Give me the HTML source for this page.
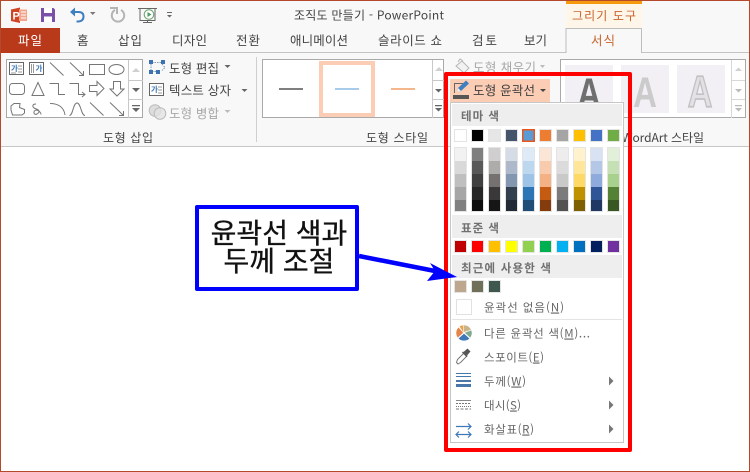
<!DOCTYPE html>
<html lang="ko"><head><meta charset="utf-8"><title>조직도 만들기 - PowerPoint</title>
<style>
html,body{margin:0;padding:0;background:#fff}
body{width:750px;height:472px;overflow:hidden}
svg{display:block}
text{font-family:"Liberation Sans","Noto Sans CJK KR",sans-serif;fill:#444;font-size:12px}
.k{font-family:"Noto Sans CJK KR","Liberation Sans",sans-serif}
.g{fill:#a8a8a8}
.m{fill:#666;font-size:11.5px}
.h{fill:#707070;font-size:11.5px;font-weight:700}
.u{text-decoration:underline}
.s{fill:none;stroke:#767676;stroke-width:1}
.b{font-size:28px;fill:#111;text-anchor:middle;stroke:#111;stroke-width:.35px}
</style></head><body>
<svg width="750" height="472" viewBox="0 0 750 472" xmlns="http://www.w3.org/2000/svg">
<rect width="750" height="472" fill="#fff"/>
<rect x="1" y="1" width="748" height="145" fill="#f8f8f8"/>
<rect x="0" y="146" width="750" height="1" fill="#c6c6c6"/>
<rect x="1" y="52" width="748" height="1" fill="#c4c4c4"/>

<!-- QAT -->
<path d="M11 9.5L20 7.5V23L11 21Z" fill="#d04423"/><rect x="19" y="9.5" width="8" height="11.5" fill="#f3a58b"/><path d="M21 12h5M21 15h5M21 18h5" stroke="#fff" stroke-width="1"/>
<text x="12.5" y="19.5" style="font-size:11px;font-weight:700;fill:#fff">P</text>
<path d="M41 8H53.5L55 9.5V22H41Z" fill="#7a50a8"/><rect x="44" y="8" width="8" height="5" fill="#fff"/><rect x="44" y="16.5" width="8" height="5.5" fill="#fff"/>
<path d="M71 12h7.5q5 0 5 4.5t-5 5h-2" fill="none" stroke="#3f7fbf" stroke-width="2"/><path d="M75 7.500l-5 4.500 5 4.500z" fill="#3f7fbf"/>
<path d="M90 12h5.500l-2.750 3z" fill="#777"/>
<path d="M115 10a6.200 6.200 0 1 0 6 0" fill="none" stroke="#b4b4b4" stroke-width="2"/><path d="M110 8h7v6" fill="none" stroke="#b4b4b4" stroke-width="2"/>
<path d="M138 8.500h19M140 8.500v12h15v-12M147.500 20.500v2M143 22.500h9" fill="none" stroke="#666"/><circle cx="149" cy="14.500" r="4.800" fill="#fff" stroke="#6aa26a"/><path d="M147.500 12l4 2.500-4 2.500z" fill="#4d9a6a"/>
<rect x="167" y="12" width="5" height="1" fill="#666"/><path d="M167 15h5l-2.500 2.500z" fill="#666"/>

<text class="k" x="294" y="19.500" textLength="150" style="font-size:12px">조직도 만들기 - PowerPoint</text>

<!-- contextual header -->
<rect x="566" y="1" width="76" height="27" fill="#fff6ea"/><rect x="566" y="1" width="76" height="3" fill="#f59a0c"/>
<text class="k" x="572" y="20" textLength="64" style="font-size:12px;fill:#c9622a">그리기 도구</text>

<!-- tabs -->
<rect x="1" y="28" width="59" height="25" fill="#b9391b"/>
<text class="k" x="18" y="45" textLength="24" style="fill:#fff;font-size:12.500px">파일</text>
<text class="k" x="77" y="45" style="font-size:12.500px">홈</text>
<text class="k" x="118" y="45" textLength="24" style="font-size:12.500px">삽입</text>
<text class="k" x="172" y="45" textLength="35" style="font-size:12.500px">디자인</text>
<text class="k" x="236" y="45" textLength="24" style="font-size:12.500px">전환</text>
<text class="k" x="290" y="45" textLength="58" style="font-size:12.500px">애니메이션</text>
<text class="k" x="378" y="45" textLength="64" style="font-size:12.500px">슬라이드 쇼</text>
<text class="k" x="472" y="45" textLength="25" style="font-size:12.500px">검토</text>
<text class="k" x="524" y="45" textLength="23" style="font-size:12.500px">보기</text>
<path d="M566 53V28.500H641.500V53" fill="#f8f8f8" stroke="#bdbdbd"/><rect x="567" y="51" width="74" height="3" fill="#f8f8f8"/>
<text class="k" x="591" y="45" textLength="24" style="fill:#c9622a;font-size:12.500px">서식</text>

<!-- shape gallery -->
<rect x="6.500" y="59.500" width="136" height="58" fill="#fff" stroke="#a9a9a9"/>
<path d="M128.500 60V118M129 80.500h14M129 99.500h14" stroke="#c8c8c8" fill="none"/>
<path d="M132 72l4-4 4 4z" fill="#d0d0d0"/><path d="M132 88h8l-4 4z" fill="#666"/><path d="M132 105h8v1.200h-8zM132 108h8l-4 4z" fill="#666"/>
<g>
<rect x="9.500" y="62.500" width="14" height="12" fill="#fff" stroke="#666"/>
<text class="k" x="11" y="71" style="font-size:7.500px;fill:#3a75b5;font-weight:700">가</text><path d="M18 66h4M18 69h4M18 72h4M11 73h5" stroke="#999"/>
<rect x="29.500" y="62.500" width="14" height="12" fill="#fff" stroke="#666"/>
<text class="k" x="35.500" y="71" style="font-size:7.500px;fill:#3a75b5;font-weight:700">가</text><path d="M31.500 64v9M33.500 64v9" stroke="#999"/>
<g class="s">
<path d="M50 62.500L63.500 75.500"/>
<path d="M70 62.500L83.500 75.500M83.500 71v4.500H79"/>
<rect x="89.500" y="64.500" width="15" height="10"/>
<ellipse cx="116.500" cy="69.500" rx="7.500" ry="5"/>
<rect x="9.500" y="83.500" width="15" height="11" rx="3"/>
<path d="M38 82.500L44 95.500H32Z"/>
<path d="M49.500 83.500H58.500V94.500H65"/>
<path d="M69.500 83.500H78.500V94.500H85M82 92l3 2.500-3 2.500"/>
<path d="M89.500 85.500H97V81.500L104 88.500L97 95.500V91.500H89.500Z"/>
<path d="M113.500 81.500H120.500V89H124L117 96L110 89H113.500Z"/>
<path d="M11 110V106L14 103.500H20L19.500 107.500L24.500 109.500V113L22 115H12.500Z"/>
<path d="M36 104C32 104 32 107 35 108.500C40 110 40 112 37 114C34 115.500 33 112 35 110.500C37 109 41 112 41 114.500"/>
<path d="M50 103.500C58 103.500 64 107 65 115"/>
<path d="M69.500 115.500C73 115.500 73 103 77 103C81 103 81 115.500 85 115.500"/>
<path d="M90 102.500L103.500 115.500"/>
<path d="M110 102.500L123.500 115.500M123.500 111v4.500H119"/>
</g></g>

<!-- edit shape commands -->
<path d="M152 62.500h10M152 71.500h4M151 64v6M162 64l3 3.500-3 3" fill="none" stroke="#7a9ac0" stroke-dasharray="1.500 1"/>
<g fill="#3c72b0"><rect x="149" y="60" width="4" height="4"/><rect x="161" y="60" width="4" height="4"/><rect x="149" y="70" width="4" height="4"/><rect x="156" y="70" width="4" height="4"/></g>
<text class="k" x="169" y="73" textLength="50" style="font-size:12.500px">도형 편집</text><path d="M224.500 65h6l-3 3z" fill="#666"/>
<rect x="149.500" y="83.500" width="14" height="12" fill="#fff" stroke="#666"/><text class="k" x="151" y="92" style="font-size:7.500px;fill:#3a75b5;font-weight:700">가</text><path d="M158 87h4M158 90h4M158 93h4" stroke="#999"/>
<text class="k" x="169" y="95" textLength="62" style="font-size:12.500px">텍스트 상자</text><path d="M241.500 89h6l-3 3z" fill="#666"/>
<circle cx="155" cy="110.500" r="5.800" fill="#ddd" stroke="#bbb"/><circle cx="160" cy="113.500" r="5.800" fill="#e2e2e2" fill-opacity=".8" stroke="#bbb"/>
<text class="k g" x="169" y="118" textLength="50" style="font-size:12.500px;fill:#a8a8a8">도형 병합</text><path d="M224.500 110h6l-3 3z" fill="#bbb"/>
<text class="k" x="103" y="142" textLength="50" style="font-size:12px">도형 삽입</text>
<rect x="256" y="57" width="1" height="85" fill="#cfcfcf"/>

<!-- style gallery -->
<rect x="262.500" y="59.500" width="181" height="58" fill="#fff" stroke="#a9a9a9"/>
<rect x="321" y="63" width="52" height="52" fill="#fff" stroke="#fbcdb4" stroke-width="4"/>
<rect x="279" y="88" width="24" height="2" fill="#7f7f7f"/><rect x="335" y="88" width="24" height="2" fill="#a9cbea"/><rect x="391" y="88" width="24" height="2" fill="#f4b68c"/>
<path d="M432.500 60V118M433 80.500h11M433 99.500h11" stroke="#c8c8c8" fill="none"/>
<path d="M435 71l4-4 4 4z" fill="#d0d0d0"/><path d="M435 89h7l-3.500 3.500z" fill="#666"/><path d="M435 105h7v1.200h-7zM435 108h7l-3.500 3.500z" fill="#666"/>
<text class="k" x="366" y="142" textLength="62" style="font-size:12px">도형 스타일</text>
<path d="M456 66l6-5 7 7-5 5z" fill="#f2f2f2" stroke="#b5b5b5"/><path d="M458 62l2-3 3 2" fill="none" stroke="#b5b5b5"/>
<text class="k" x="473" y="72" textLength="63" style="font-size:12.500px;fill:#a8a8a8">도형 채우기</text><path d="M540 65h5l-2.500 3z" fill="#bbb"/>

<!-- wordart -->
<rect x="560.500" y="59.500" width="185" height="58" fill="#fff" stroke="#a9a9a9"/>
<rect x="565" y="65" width="48" height="48" fill="#f3f0f5"/><rect x="621" y="65" width="48" height="48" fill="#f3f0f5"/><rect x="677" y="65" width="48" height="48" fill="#f3f0f5"/>
<text transform="translate(589 108) scale(1 1.300)" text-anchor="middle" style="font-size:33px;font-weight:700;fill:#6f6f6f">A</text>
<text transform="translate(645 107) scale(1 1.300)" text-anchor="middle" style="font-size:33px;font-weight:700;fill:#cbcbcb">A</text>
<text transform="translate(700 107) scale(1 1.300)" text-anchor="middle" style="font-size:34px;font-weight:700;fill:#e3e1e6;stroke:#c2c2c2;stroke-width:1.300">A</text>
<path d="M731.500 60V118M732 80.500h13M732 99.500h13" stroke="#d8d8d8" fill="none"/>
<path d="M735 71l3.500-3.500 3.500 3.500z" fill="#d0d0d0"/><path d="M735 89h7l-3.500 3.500z" fill="#bbb"/><path d="M735 105h7v1.200h-7zM735 108h7l-3.500 3.500z" fill="#bbb"/>
<text class="k" x="622" y="142" textLength="82" style="font-size:12px">WordArt 스타일</text>

<!-- outline button -->
<rect x="450" y="79" width="100" height="24" fill="#fccdb5"/>
<rect x="453" y="95" width="16" height="4" fill="#555"/>
<path d="M454.500 93V83.500H463" fill="none" stroke="#666"/><path d="M457 92l1-4 8-7.500 3 3-8 7.500z" fill="#3f7fbf"/><path d="M457 92l1-4 3 3z" fill="#eee"/>
<text class="k" x="473" y="95" textLength="62" style="font-size:12.500px;fill:#3f3f3f">도형 윤곽선</text><path d="M540 89h6l-3 3z" fill="#444"/>

<!-- dropdown menu -->
<rect x="450.500" y="102.500" width="173" height="340" fill="#fff" stroke="#c6c6c6"/>
<rect x="452" y="104" width="170" height="22" fill="#eee"/>
<text class="k h" x="461" y="120" textLength="38">테마 색</text>
<g fill="#e4e4e4">
<rect x="454" y="129" width="13" height="13"/><rect x="471" y="129" width="13" height="13"/><rect x="488" y="129" width="13" height="13"/><rect x="505" y="129" width="13" height="13"/><rect x="539" y="129" width="13" height="13"/><rect x="556" y="129" width="13" height="13"/><rect x="573" y="129" width="13" height="13"/><rect x="590" y="129" width="13" height="13"/><rect x="607" y="129" width="13" height="13"/>
<rect x="454" y="147" width="13" height="65"/><rect x="471" y="147" width="13" height="65"/><rect x="488" y="147" width="13" height="65"/><rect x="505" y="147" width="13" height="65"/><rect x="522" y="147" width="13" height="65"/><rect x="539" y="147" width="13" height="65"/><rect x="556" y="147" width="13" height="65"/><rect x="573" y="147" width="13" height="65"/><rect x="590" y="147" width="13" height="65"/><rect x="607" y="147" width="13" height="65"/>
<rect x="454" y="240" width="13" height="13"/><rect x="471" y="240" width="13" height="13"/><rect x="488" y="240" width="13" height="13"/><rect x="505" y="240" width="13" height="13"/><rect x="522" y="240" width="13" height="13"/><rect x="539" y="240" width="13" height="13"/><rect x="556" y="240" width="13" height="13"/><rect x="573" y="240" width="13" height="13"/><rect x="590" y="240" width="13" height="13"/><rect x="607" y="240" width="13" height="13"/>
<rect x="454" y="280" width="13" height="13"/><rect x="471" y="280" width="13" height="13"/><rect x="488" y="280" width="13" height="13"/>
</g>
<rect x="455" y="130" width="11" height="11" fill="#fff"/><rect x="472" y="130" width="11" height="11" fill="#000"/><rect x="489" y="130" width="11" height="11" fill="#e7e6e6"/><rect x="506" y="130" width="11" height="11" fill="#44546a"/>
<rect x="522" y="129" width="13" height="13" fill="#e8551d"/><rect x="523.500" y="130.500" width="10" height="10" fill="#5b9bd5"/>
<rect x="540" y="130" width="11" height="11" fill="#ed7d31"/><rect x="557" y="130" width="11" height="11" fill="#a5a5a5"/><rect x="574" y="130" width="11" height="11" fill="#ffc000"/><rect x="591" y="130" width="11" height="11" fill="#4472c4"/><rect x="608" y="130" width="11" height="11" fill="#70ad47"/>

<g>
<g transform="translate(455 148)"><rect y="0" width="11" height="13" fill="#f2f2f2"/><rect y="13" width="11" height="13" fill="#d9d9d9"/><rect y="26" width="11" height="13" fill="#bfbfbf"/><rect y="39" width="11" height="13" fill="#a6a6a6"/><rect y="52" width="11" height="11" fill="#808080"/></g>
<g transform="translate(472 148)"><rect y="0" width="11" height="13" fill="#7f7f7f"/><rect y="13" width="11" height="13" fill="#595959"/><rect y="26" width="11" height="13" fill="#404040"/><rect y="39" width="11" height="13" fill="#262626"/><rect y="52" width="11" height="11" fill="#0d0d0d"/></g>
<g transform="translate(489 148)"><rect y="0" width="11" height="13" fill="#d0cece"/><rect y="13" width="11" height="13" fill="#aeabab"/><rect y="26" width="11" height="13" fill="#757171"/><rect y="39" width="11" height="13" fill="#3a3838"/><rect y="52" width="11" height="11" fill="#171616"/></g>
<g transform="translate(506 148)"><rect y="0" width="11" height="13" fill="#d6dce5"/><rect y="13" width="11" height="13" fill="#adb9ca"/><rect y="26" width="11" height="13" fill="#8497b0"/><rect y="39" width="11" height="13" fill="#323f4f"/><rect y="52" width="11" height="11" fill="#222a35"/></g>
<g transform="translate(523 148)"><rect y="0" width="11" height="13" fill="#deebf7"/><rect y="13" width="11" height="13" fill="#bdd7ee"/><rect y="26" width="11" height="13" fill="#9dc3e6"/><rect y="39" width="11" height="13" fill="#2e75b6"/><rect y="52" width="11" height="11" fill="#1f4e79"/></g>
<g transform="translate(540 148)"><rect y="0" width="11" height="13" fill="#fbe5d6"/><rect y="13" width="11" height="13" fill="#f8cbad"/><rect y="26" width="11" height="13" fill="#f4b183"/><rect y="39" width="11" height="13" fill="#c55a11"/><rect y="52" width="11" height="11" fill="#843c0c"/></g>
<g transform="translate(557 148)"><rect y="0" width="11" height="13" fill="#ededed"/><rect y="13" width="11" height="13" fill="#dbdbdb"/><rect y="26" width="11" height="13" fill="#c9c9c9"/><rect y="39" width="11" height="13" fill="#7b7b7b"/><rect y="52" width="11" height="11" fill="#525252"/></g>
<g transform="translate(574 148)"><rect y="0" width="11" height="13" fill="#fff2cc"/><rect y="13" width="11" height="13" fill="#ffe699"/><rect y="26" width="11" height="13" fill="#ffd966"/><rect y="39" width="11" height="13" fill="#bf9000"/><rect y="52" width="11" height="11" fill="#7f6000"/></g>
<g transform="translate(591 148)"><rect y="0" width="11" height="13" fill="#d9e2f3"/><rect y="13" width="11" height="13" fill="#b4c7e7"/><rect y="26" width="11" height="13" fill="#8faadc"/><rect y="39" width="11" height="13" fill="#2f5597"/><rect y="52" width="11" height="11" fill="#1f3864"/></g>
<g transform="translate(608 148)"><rect y="0" width="11" height="13" fill="#e2f0d9"/><rect y="13" width="11" height="13" fill="#c5e0b4"/><rect y="26" width="11" height="13" fill="#a9d18e"/><rect y="39" width="11" height="13" fill="#548235"/><rect y="52" width="11" height="11" fill="#385723"/></g>
</g>

<rect x="452" y="215" width="170" height="23" fill="#eee"/>
<text class="k h" x="461" y="232" textLength="38">표준 색</text>
<rect x="455" y="241" width="11" height="11" fill="#c00000"/><rect x="472" y="241" width="11" height="11" fill="#ff0000"/><rect x="489" y="241" width="11" height="11" fill="#ffc000"/><rect x="506" y="241" width="11" height="11" fill="#ffff00"/><rect x="523" y="241" width="11" height="11" fill="#92d050"/><rect x="540" y="241" width="11" height="11" fill="#00b050"/><rect x="557" y="241" width="11" height="11" fill="#00b0f0"/><rect x="574" y="241" width="11" height="11" fill="#0070c0"/><rect x="591" y="241" width="11" height="11" fill="#002060"/><rect x="608" y="241" width="11" height="11" fill="#7030a0"/>
<rect x="452" y="255" width="170" height="23" fill="#eee"/>
<text class="k h" x="461" y="272" textLength="90">최근에 사용한 색</text>
<rect x="455" y="281" width="11" height="11" fill="#bda88f"/><rect x="472" y="281" width="11" height="11" fill="#6f6f5a"/><rect x="489" y="281" width="11" height="11" fill="#40574e"/>

<rect x="456.500" y="299.500" width="15" height="15" fill="#fff" stroke="#e2e2e2"/>
<text class="k m" x="484" y="311.500" textLength="80">윤곽선 없음(<tspan class="u">N</tspan>)</text>
<rect x="452" y="319" width="170" height="1" fill="#e4e4e4"/>

<!-- pie -->
<g transform="translate(464 333)">
<path d="M-.6-.8L-4.500-6.500A7.800 7.800 0 0 1 -.6-7.800Z" fill="#e8a24a"/>
<path d="M0-1L0-7.800A7.800 7.800 0 0 1 7-3.200Z" fill="#c9b48a"/>
<path d="M.8-.3L7.300-2.600A7.800 7.800 0 0 1 6.200 4.600Z" fill="#7fa88f"/>
<path d="M0 .6L5.400 5.500A7.800 7.800 0 0 1 -5.400 5.500Z" fill="#3f78b8"/>
<path d="M-.8-.3L-6.200 4.600A7.800 7.800 0 0 1 -5.500-5.500Z" fill="#e5854a"/>
</g>
<text class="k m" x="484" y="337.500" textLength="106">다른 윤곽선 색(<tspan class="u">M</tspan>)...</text>

<!-- eyedropper -->
<path d="M458 364l-1.500-1.500 1-3 6.500-6.500 3 3-6.500 6.500z" fill="#fff" stroke="#777"/>
<path d="M463.500 352l4-3.500 3 3-3.500 4z" fill="#555"/><path d="M462.500 352l4.500 4.500" stroke="#555" stroke-width="1.500"/>
<text class="k m" x="484" y="361.500" textLength="60">스포이트(<tspan class="u">E</tspan>)</text>

<!-- weight -->
<g fill="#4a76aa"><rect x="456" y="373" width="15" height="1"/><rect x="456" y="376" width="15" height="1"/><rect x="456" y="380" width="15" height="2"/><rect x="456" y="384" width="15" height="3"/></g>
<text class="k m" x="484" y="385.500" textLength="42">두께(<tspan class="u">W</tspan>)</text>
<path d="M609 376.500l4.500 4.500-4.500 4.500z" fill="#777"/>

<!-- dash -->
<rect x="456" y="400" width="15" height="1" fill="#888"/>
<path d="M456 403.500h15" stroke="#777" stroke-dasharray="2 1"/><path d="M456 406.500h15" stroke="#777" stroke-dasharray="1 1"/><path d="M456 409h15" stroke="#777" stroke-dasharray="3 1.500"/>
<text class="k m" x="484" y="409.500" textLength="37">대시(<tspan class="u">S</tspan>)</text>
<path d="M609 400.500l4.500 4.500-4.500 4.500z" fill="#777"/>

<!-- arrows -->
<path d="M456 426.500H471M468 423.500l3 3-3 3M457 434.500H471M459 431.500l-3 3 3 3M468 431.500l3 3-3 3" fill="none" stroke="#3f78b8" stroke-width="1.200"/>
<text class="k m" x="484" y="433.500" textLength="50">화살표(<tspan class="u">R</tspan>)</text>
<path d="M609 424.500l4.500 4.500-4.500 4.500z" fill="#777"/>

<!-- red highlight -->
<rect x="446" y="74" width="184" height="376" fill="none" stroke="#ff0000" stroke-width="4" stroke-linejoin="round"/>

<!-- callout -->
<rect x="197" y="207" width="160" height="82" fill="#fff" stroke="#0000ff" stroke-width="4" stroke-linejoin="round"/>
<text class="k b" x="279" y="243">윤곽선 색과</text>
<text class="k b" x="279" y="271">두께 조절</text>
<path d="M359 256L440 272" stroke="#0000ff" stroke-width="4.500"/>
<path d="M430 263L457 277L427 281L435 271Z" fill="#0000ff"/>

<!-- window border -->
<rect x="0.500" y="0.500" width="749" height="471" fill="none" stroke="#b5492c"/>
</svg>
</body></html>
